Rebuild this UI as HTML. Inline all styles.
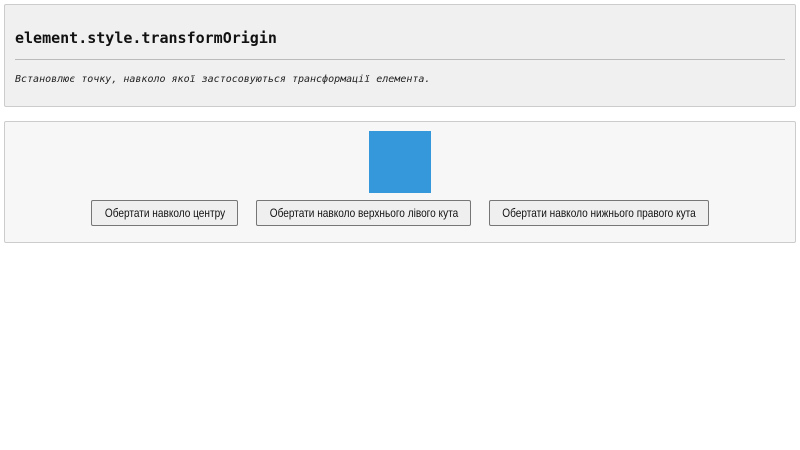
<!DOCTYPE html>
<html><head><meta charset="utf-8"><style>
*{box-sizing:border-box}
body{margin:0;background:#fff;font-family:"Liberation Sans",sans-serif}
.b1{position:absolute;left:4px;top:4px;width:792px;height:103px;background:#f0f0f0;border:1px solid #ccc;border-radius:2px}
h1{position:absolute;left:10px;top:24px;margin:0;font:bold 15px "DejaVu Sans Mono",monospace;color:#111}
.hr{position:absolute;left:10px;right:10px;top:54px;height:1px;background:#bbb}
.d{position:absolute;left:10px;top:69px;margin:0;font:italic 10px "DejaVu Sans Mono",monospace;color:#222}
.b2{position:absolute;left:4px;top:121px;width:792px;height:122px;background:#f7f7f7;border:1px solid #ccc;border-radius:2px}
.sq{position:absolute;left:369px;top:131px;width:62px;height:62px;background:#3498db}
.btn{position:absolute;top:200px;height:26px;background:#efefef;border:1px solid #767676;border-radius:2px;font-size:12px;color:#111;line-height:24px;white-space:nowrap}
.btn span{position:absolute;left:50%;top:0;transform:translateX(-50%) scaleX(0.84)}
</style></head><body>
<div class="b1"><h1>element.style.transformOrigin</h1><div class="hr"></div><p class="d">Встановлює точку, навколо якої застосовуються трансформації елемента.</p></div>
<div class="b2"></div>
<div class="sq"></div>
<div class="btn" style="left:91px;width:147px"><span>Обертати навколо центру</span></div>
<div class="btn" style="left:256px;width:215px"><span>Обертати навколо верхнього лівого кута</span></div>
<div class="btn" style="left:489px;width:220px"><span>Обертати навколо нижнього правого кута</span></div>
</body></html>
